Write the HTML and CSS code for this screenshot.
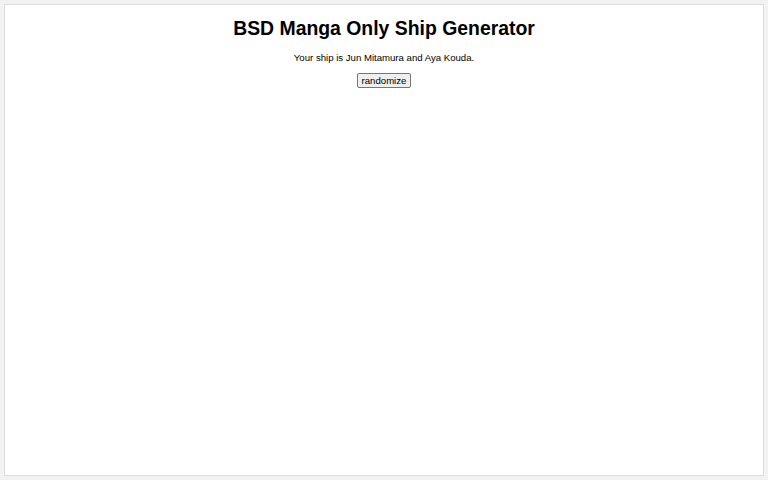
FILE: index.html
```html
<!DOCTYPE html>
<html lang="en">
<head>
  <title>BSD Manga Only Ship Generator</title>
  <meta charset="utf-8">
  <meta name="viewport" content="width=device-width, initial-scale=1">
  <link rel="stylesheet" href="styles.css">
</head>
<body>
    <div class="page">
        <h1 class="title">BSD Manga Only Ship Generator</h1>
        <p class="result">Your ship is <span id="first">Jun Mitamura</span> and <span id="second">Aya Kouda</span>.</p>
        <button class="randomize" type="button">randomize</button>
    </div>
</body>
</html>
```
FILE: styles.css
```css
html, body {
    height: 100%;
}
body {
    margin: 0;
    padding: 4px;
    box-sizing: border-box;
    background: #f2f2f2;
    font-family: "Liberation Sans", Arial, sans-serif;
}
.page {
    height: 100%;
    box-sizing: border-box;
    background: #fff;
    border: 1px solid #dcdcdc;
    text-align: center;
    padding-top: 12px;
}
.title {
    margin: 0;
    font-size: 19.4px;
    line-height: 22px;
    font-weight: bold;
    color: #000;
}
.result {
    margin: 13px 0 7px;
    font-size: 9.6px;
    line-height: 11px;
    color: #000;
}
.randomize {
    font-family: "Liberation Sans", Arial, sans-serif;
    font-size: 9.6px;
    line-height: 11px;
    padding: 1px 4px;
    color: #000;
    background: #efefef;
    border: 1px solid #767676;
    border-radius: 2px;
}
```
